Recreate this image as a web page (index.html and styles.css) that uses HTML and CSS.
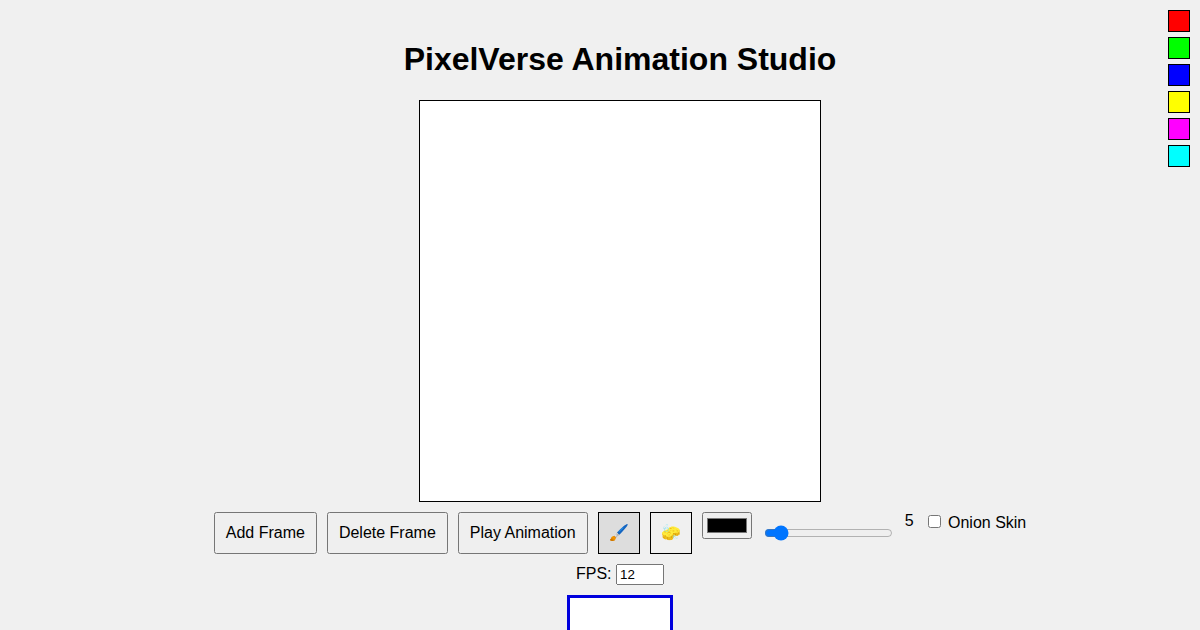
FILE: index.html
```
<!DOCTYPE html>
<html lang="en">
<head>
    <meta charset="UTF-8">
    <meta name="viewport" content="width=device-width, initial-scale=1.0">
    <title>PixelVerse Animation Studio</title>
    <link rel="stylesheet" href="styles.css">
</head>
<body>
    <main class="studio">
        <h1>PixelVerse Animation Studio</h1>
        <canvas id="canvas" width="400" height="400"></canvas>

        <div class="controls">
            <button id="addFrame">Add Frame</button>
            <button id="deleteFrame">Delete Frame</button>
            <button id="playAnimation">Play Animation</button>
            <button class="tool-btn active" id="brush" aria-label="Brush">🖌️</button>
            <button class="tool-btn" id="eraser" aria-label="Eraser">🧽</button>
            <input type="color" id="colorPicker" value="#000000" aria-label="Color">
            <input type="range" id="brushSize" min="1" max="50" value="5" aria-label="Brush size">
            <output id="brushSizeValue" for="brushSize">5</output>
            <div>
                <input type="checkbox" id="onionSkin">
                <label for="onionSkin">Onion Skin</label>
            </div>
        </div>

        <div class="fps">
            <label for="fps">FPS:</label>
            <input type="number" id="fps" min="1" max="60" value="12">
        </div>

        <div class="timeline" id="timeline">
            <canvas class="frame active" width="100" height="100"></canvas>
        </div>
    </main>

    <div class="palette" id="palette">
        <button class="swatch red" aria-label="Red"></button>
        <button class="swatch lime" aria-label="Green"></button>
        <button class="swatch blue" aria-label="Blue"></button>
        <button class="swatch yellow" aria-label="Yellow"></button>
        <button class="swatch magenta" aria-label="Magenta"></button>
        <button class="swatch cyan" aria-label="Cyan"></button>
    </div>

    <script>
        const tools = document.querySelectorAll('.tool-btn');
        const brushSize = document.getElementById('brushSize');
        const brushSizeValue = document.getElementById('brushSizeValue');

        tools.forEach(tool => {
            tool.addEventListener('click', () => {
                tools.forEach(btn => btn.classList.remove('active'));
                tool.classList.add('active');
            });
        });

        brushSize.addEventListener('input', () => {
            brushSizeValue.textContent = brushSize.value;
        });
    </script>
</body>
</html>
```
FILE: styles.css
```
body {
    margin: 0;
    padding: 20px;
    font-family: Arial, "Liberation Sans", sans-serif;
    background-color: #f0f0f0;
}

.studio {
    display: flex;
    flex-direction: column;
    align-items: center;
    padding-left: 40px;
}

#canvas {
    border: 1px solid #000;
    background-color: #fff;
}

.controls {
    display: flex;
    flex-wrap: wrap;
    justify-content: center;
    gap: 10px;
    margin-top: 10px;
}

.controls button {
    padding: 10px;
    font-size: 16px;
    cursor: pointer;
}

.controls .tool-btn {
    width: 42px;
    height: 42px;
    padding: 0;
    border: 1px solid #000;
    background-color: #f0f0f0;
}

.controls .tool-btn.active {
    background-color: #ddd;
}

.fps {
    margin-top: 10px;
}

.fps input {
    width: 40px;
}

.timeline {
    display: flex;
    gap: 10px;
    margin-top: 10px;
}

.frame {
    border: 1px solid #000;
    background-color: #fff;
}

.frame.active {
    border: 3px solid #0000dd;
}

/* Quick colors pinned to the corner */
.palette {
    position: absolute;
    top: 10px;
    right: 10px;
    display: flex;
    flex-direction: column;
    gap: 5px;
}

.swatch {
    width: 22px;
    height: 22px;
    padding: 0;
    border: 1px solid #000;
    cursor: pointer;
}

.red { background-color: #ff0000; }
.lime { background-color: #00ff00; }
.blue { background-color: #0000ff; }
.yellow { background-color: #ffff00; }
.magenta { background-color: #ff00ff; }
.cyan { background-color: #00ffff; }
```
